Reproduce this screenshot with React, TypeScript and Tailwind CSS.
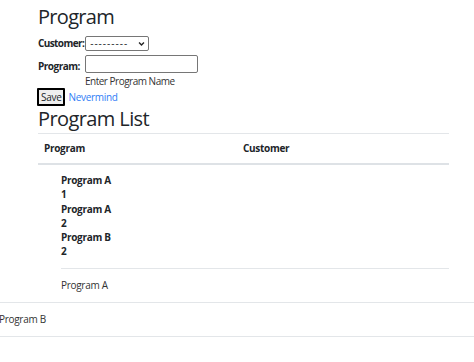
export default function App() {
  const nested = ["Program A", "1", "Program A", "2", "Program B", "2"];

  return (
    <div className="min-h-screen overflow-hidden bg-white text-[#212529] font-['Open_Sans',sans-serif] text-[10px] tracking-[-0.3px]">
      <div className="px-[38px] pt-[4px]">
        <h2 className="text-[20px] leading-[26px] font-normal tracking-[-0.7px] mb-[6px]">Program</h2>

        <div className="flex items-center gap-[1px] h-[15px]">
          <label className="font-bold tracking-[-0.6px]">Customer:</label>
          <div className="w-[64px] h-[15px] border border-[#767676] rounded-[2px] flex items-center justify-between pl-[4px] pr-[3px] text-[10px]">
            <span className="tracking-[1px]">---------</span>
            <svg viewBox="0 0 10 10" className="w-[7px] h-[7px]" fill="none" stroke="#222" strokeWidth="2">
              <path d="M1.5 3.5 5 7l3.5-3.5" />
            </svg>
          </div>
        </div>

        <div className="flex items-end gap-[5px] mt-[4px]">
          <label className="font-bold leading-[14px] tracking-[-0.5px]">Program:</label>
          <div className="w-[113px] h-[18px] border border-[#767676] rounded-[2px]" />
        </div>
        <div className="pl-[47px] text-[#333] leading-[14px] mt-[1px] tracking-[-0.5px]">Enter Program Name</div>

        <div className="flex items-center gap-[3px] -ml-[1px]">
          <button className="h-[18px] px-[2px] border-2 border-black bg-[#efefef] rounded-[1px] text-[10px] leading-[14px]">
            Save
          </button>
          <a className="text-[#2f7df6]">Nevermind</a>
        </div>

        <h2 className="text-[20px] leading-[26px] font-normal tracking-[-0.6px]">Program List</h2>

        <div className="mt-[1px] w-[411px] border-t border-[#e3e6e9]">
          <div className="flex h-[31px] items-center font-bold border-b-2 border-[#dee2e6]">
            <div className="w-[199px] pl-[6px]">Program</div>
            <div className="pl-[6px]">Customer</div>
          </div>
          <div className="pl-[23px] pt-[8px]">
            <div className="font-bold leading-[14.3px] pb-[9px]">
              {nested.map((t, i) => (
                <div key={i}>{t}</div>
              ))}
            </div>
            <div className="border-t border-[#e3e6e9] h-[34px] flex items-center text-[#333]">Program A</div>
          </div>
        </div>
      </div>
      <div className="border-t border-[#e3e6e9] border-b h-[35px] flex items-center -ml-[1px] text-[#333]">Program B</div>
    </div>
  );
}
